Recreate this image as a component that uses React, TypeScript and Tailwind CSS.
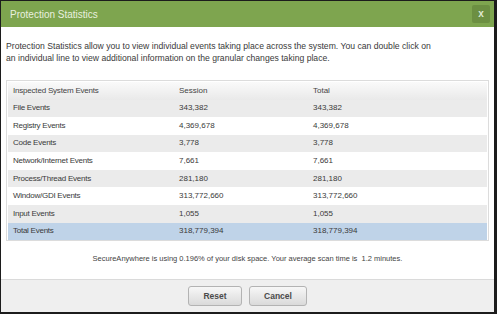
import React from "react";

interface EventRow {
  name: string;
  session: string;
  total: string;
}

const rows: EventRow[] = [
  { name: "File Events", session: "343,382", total: "343,382" },
  { name: "Registry Events", session: "4,369,678", total: "4,369,678" },
  { name: "Code Events", session: "3,778", total: "3,778" },
  { name: "Network/Internet Events", session: "7,661", total: "7,661" },
  { name: "Process/Thread Events", session: "281,180", total: "281,180" },
  { name: "Window/GDI Events", session: "313,772,660", total: "313,772,660" },
  { name: "Input Events", session: "1,055", total: "1,055" },
];

function Row({ row, index }: { row: EventRow; index: number }) {
  const bg = index % 2 === 0 ? "bg-[#ebebeb]" : "bg-white";
  return (
    <div className={`flex h-[17.6px] items-center ${bg}`}>
      <div className="w-[171px] pl-[5px] tracking-[-0.25px]">{row.name}</div>
      <div className="w-[134px]">{row.session}</div>
      <div className="flex-1">{row.total}</div>
    </div>
  );
}

export default function App() {
  return (
    <div
      className="w-[497px] h-[314px] bg-[#1c1c1c] pt-px pl-px pr-[3px] pb-[2px]"
      style={{ fontFamily: '"Liberation Sans", Arial, sans-serif' }}
    >
      <div className="flex h-full flex-col bg-white">
        {/* Title bar */}
        <div className="flex h-[26px] items-center justify-between bg-[#7ea54f] pl-[9px] pr-[4px]">
          <span className="text-[10px] text-[#e9f0df]">Protection Statistics</span>
          <button className="flex h-[18px] w-[18px] items-center justify-center rounded-[2px] bg-[#6c8f42] text-[10px] font-bold leading-none text-[#dfe8d2]">
            x
          </button>
        </div>

        {/* Body */}
        <div className="flex-1 px-[5px] pt-[12.5px] text-[8px] text-[#3a3a3a]">
          <p className="text-[8.65px] leading-[12px]">
            Protection Statistics allow you to view individual events taking place across the system. You can double click on
            <br />
            an individual line to view additional information on the granular changes taking place.
          </p>

          <div className="mt-[16.5px] border border-[#dcdcdc] p-px pb-0">
            <div className="flex h-[17.5px] items-center bg-gradient-to-b from-[#fafafa] to-[#e9e9e9] text-[#444]">
              <div className="w-[171px] pl-[5px] tracking-[-0.2px]">Inspected System Events</div>
              <div className="w-[134px]">Session</div>
              <div className="flex-1">Total</div>
            </div>
            {rows.map((row, i) => (
              <Row key={row.name} row={row} index={i} />
            ))}
            <div className="flex h-[17.6px] items-center bg-[#bfd3e8]">
              <div className="w-[171px] pl-[5px] tracking-[-0.25px]">Total Events</div>
              <div className="w-[134px]">318,779,394</div>
              <div className="flex-1">318,779,394</div>
            </div>
          </div>

          <p className="mt-[12px] text-center text-[7.5px] text-[#444]">
            SecureAnywhere is using 0.196% of your disk space. Your average scan time is &nbsp;1.2 minutes.
          </p>
        </div>

        {/* Button bar */}
        <div className="flex h-[33px] items-center justify-center gap-[7px] border-t border-[#dadada] bg-[#efefef]">
          <button className="h-[20px] w-[54px] rounded-[3px] border border-[#b3b3b3] bg-gradient-to-b from-[#f7f7f7] to-[#dadada] text-[8.5px] font-bold text-[#4a4a4a]">
            Reset
          </button>
          <button className="h-[20px] w-[58px] rounded-[3px] border border-[#b3b3b3] bg-gradient-to-b from-[#f7f7f7] to-[#dadada] text-[8.5px] font-bold text-[#4a4a4a]">
            Cancel
          </button>
        </div>
      </div>
    </div>
  );
}
